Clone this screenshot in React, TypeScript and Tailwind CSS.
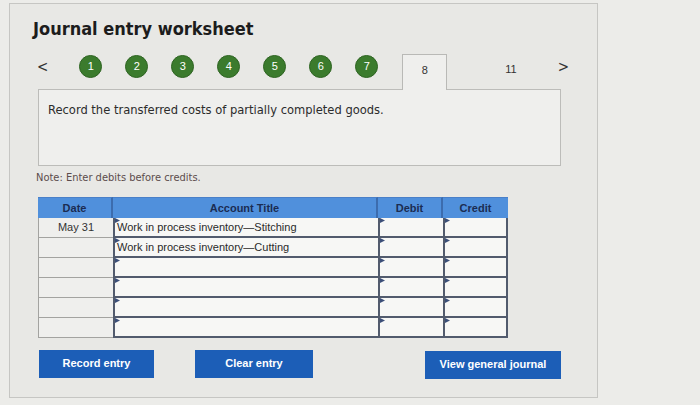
const steps = [1, 2, 3, 4, 5, 6, 7];

const rows = [
  { date: "May 31", account: "Work in process inventory—Stitching" },
  { date: "", account: "Work in process inventory—Cutting" },
  { date: "", account: "" },
  { date: "", account: "" },
  { date: "", account: "" },
  { date: "", account: "" },
];

function Flag() {
  return (
    <svg className="absolute left-0 top-0" width="5" height="6" viewBox="0 0 5 6">
      <polygon points="0,0 5,2.5 0,5" fill="#3c4f78" />
    </svg>
  );
}

function InputCell({ text, last }: { text?: string; last?: boolean }) {
  return (
    <div
      className={
        "relative h-[20px] border-b-2 border-l-2 border-[#525b6d] bg-[#f7f7f5] pl-[2px] text-[11px] leading-[18px] text-[#2a2a2a] " +
        (last ? "border-r-2" : "")
      }
    >
      <Flag />
      {text}
    </div>
  );
}

export default function App() {
  const sans = { fontFamily: '"DejaVu Sans Condensed", "DejaVu Sans", sans-serif' };
  const arial = { fontFamily: '"Liberation Sans", Arial, sans-serif' };

  return (
    <div className="h-[405px] w-[700px] overflow-hidden bg-[#ecece9] pl-[9px] pt-[3px]" style={arial}>
      <div className="h-[395px] w-[589px] border border-[#c6c6c3] bg-[#e8e8e5]">
        {/* title */}
        <h1 className="ml-[23px] mt-[14px] text-[18px] font-bold leading-[22px] text-[#1c1c1c]" style={sans}>
          Journal entry worksheet
        </h1>

        {/* step nav */}
        <div className="mt-[14px] flex h-[36px] items-start">
          <span className="ml-[27px] mt-[5px] text-[15px] leading-[16px] text-[#333]" style={sans}>
            &lt;
          </span>
          <div className="ml-[31px] mt-[1px] flex gap-[23px]">
            {steps.map((n) => (
              <div
                key={n}
                className="flex h-[23px] w-[23px] items-center justify-center rounded-full border border-[#2e6422] bg-[#3b7b2d] text-[11px] text-white"
              >
                {n}
              </div>
            ))}
          </div>
          <div className="relative z-10 ml-[24px] flex h-[36px] w-[45px] justify-center border-l border-r border-t border-[#b9b9b6] bg-[#efefed] pt-[7px] text-[11px] text-[#333]">
            8
          </div>
          <span className="ml-[58px] mt-[7px] text-[11px] text-[#333]">11</span>
          <span className="ml-[41px] mt-[5px] text-[15px] leading-[16px] text-[#333]" style={sans}>
            &gt;
          </span>
        </div>

        {/* question box */}
        <div
          className="-mt-px ml-[28px] h-[77px] w-[523px] border border-[#bcbcb9] bg-[#efefed] pl-[9px] pt-[10px] text-[12.8px] text-[#2c2c2c]"
          style={sans}
        >
          Record the transferred costs of partially completed goods.
        </div>

        <p className="ml-[26px] mt-[4px] text-[11px] text-[#5c4c4c]" style={sans}>
          Note: Enter debits before credits.
        </p>

        {/* journal table */}
        <div className="ml-[28px] mt-[10px] w-[470px]">
          <div className="grid grid-cols-[75px_265px_65px_65px] bg-[#5090dc] text-[11px] font-bold text-[#1b2c52]">
            <div className="h-[21px] border-r-2 border-t border-[#3c6cae] border-t-[#4a80c8] text-center leading-[20px]">Date</div>
            <div className="h-[21px] border-r-2 border-t border-[#3c6cae] border-t-[#4a80c8] text-center leading-[20px]">Account Title</div>
            <div className="h-[21px] border-r-2 border-t border-[#3c6cae] border-t-[#4a80c8] text-center leading-[20px]">Debit</div>
            <div className="h-[21px] border-t border-[#4a80c8] text-center leading-[20px]">Credit</div>
          </div>
          <div className="grid grid-cols-[75px_265px_65px_65px]">
            {rows.map((r, i) => (
              <div key={i} className="contents">
                <div className="h-[20px] border-b border-l border-[#a3a3a0] bg-[#efefed] text-center text-[11px] leading-[19px] text-[#333]">
                  {r.date}
                </div>
                <InputCell text={r.account} />
                <InputCell />
                <InputCell last />
              </div>
            ))}
          </div>
        </div>

        {/* actions */}
        <div className="mt-[12px] flex items-start">
          <button className="ml-[29px] h-[28px] w-[115px] bg-[#1c5eb7] text-[11px] font-bold text-white">
            Record entry
          </button>
          <button className="ml-[41px] h-[28px] w-[118px] bg-[#1c5eb7] text-[11px] font-bold text-white">
            Clear entry
          </button>
          <button className="ml-[112px] mt-[1px] h-[28px] w-[136px] bg-[#1c5eb7] text-[11px] font-bold text-white">
            View general journal
          </button>
        </div>
      </div>
    </div>
  );
}
